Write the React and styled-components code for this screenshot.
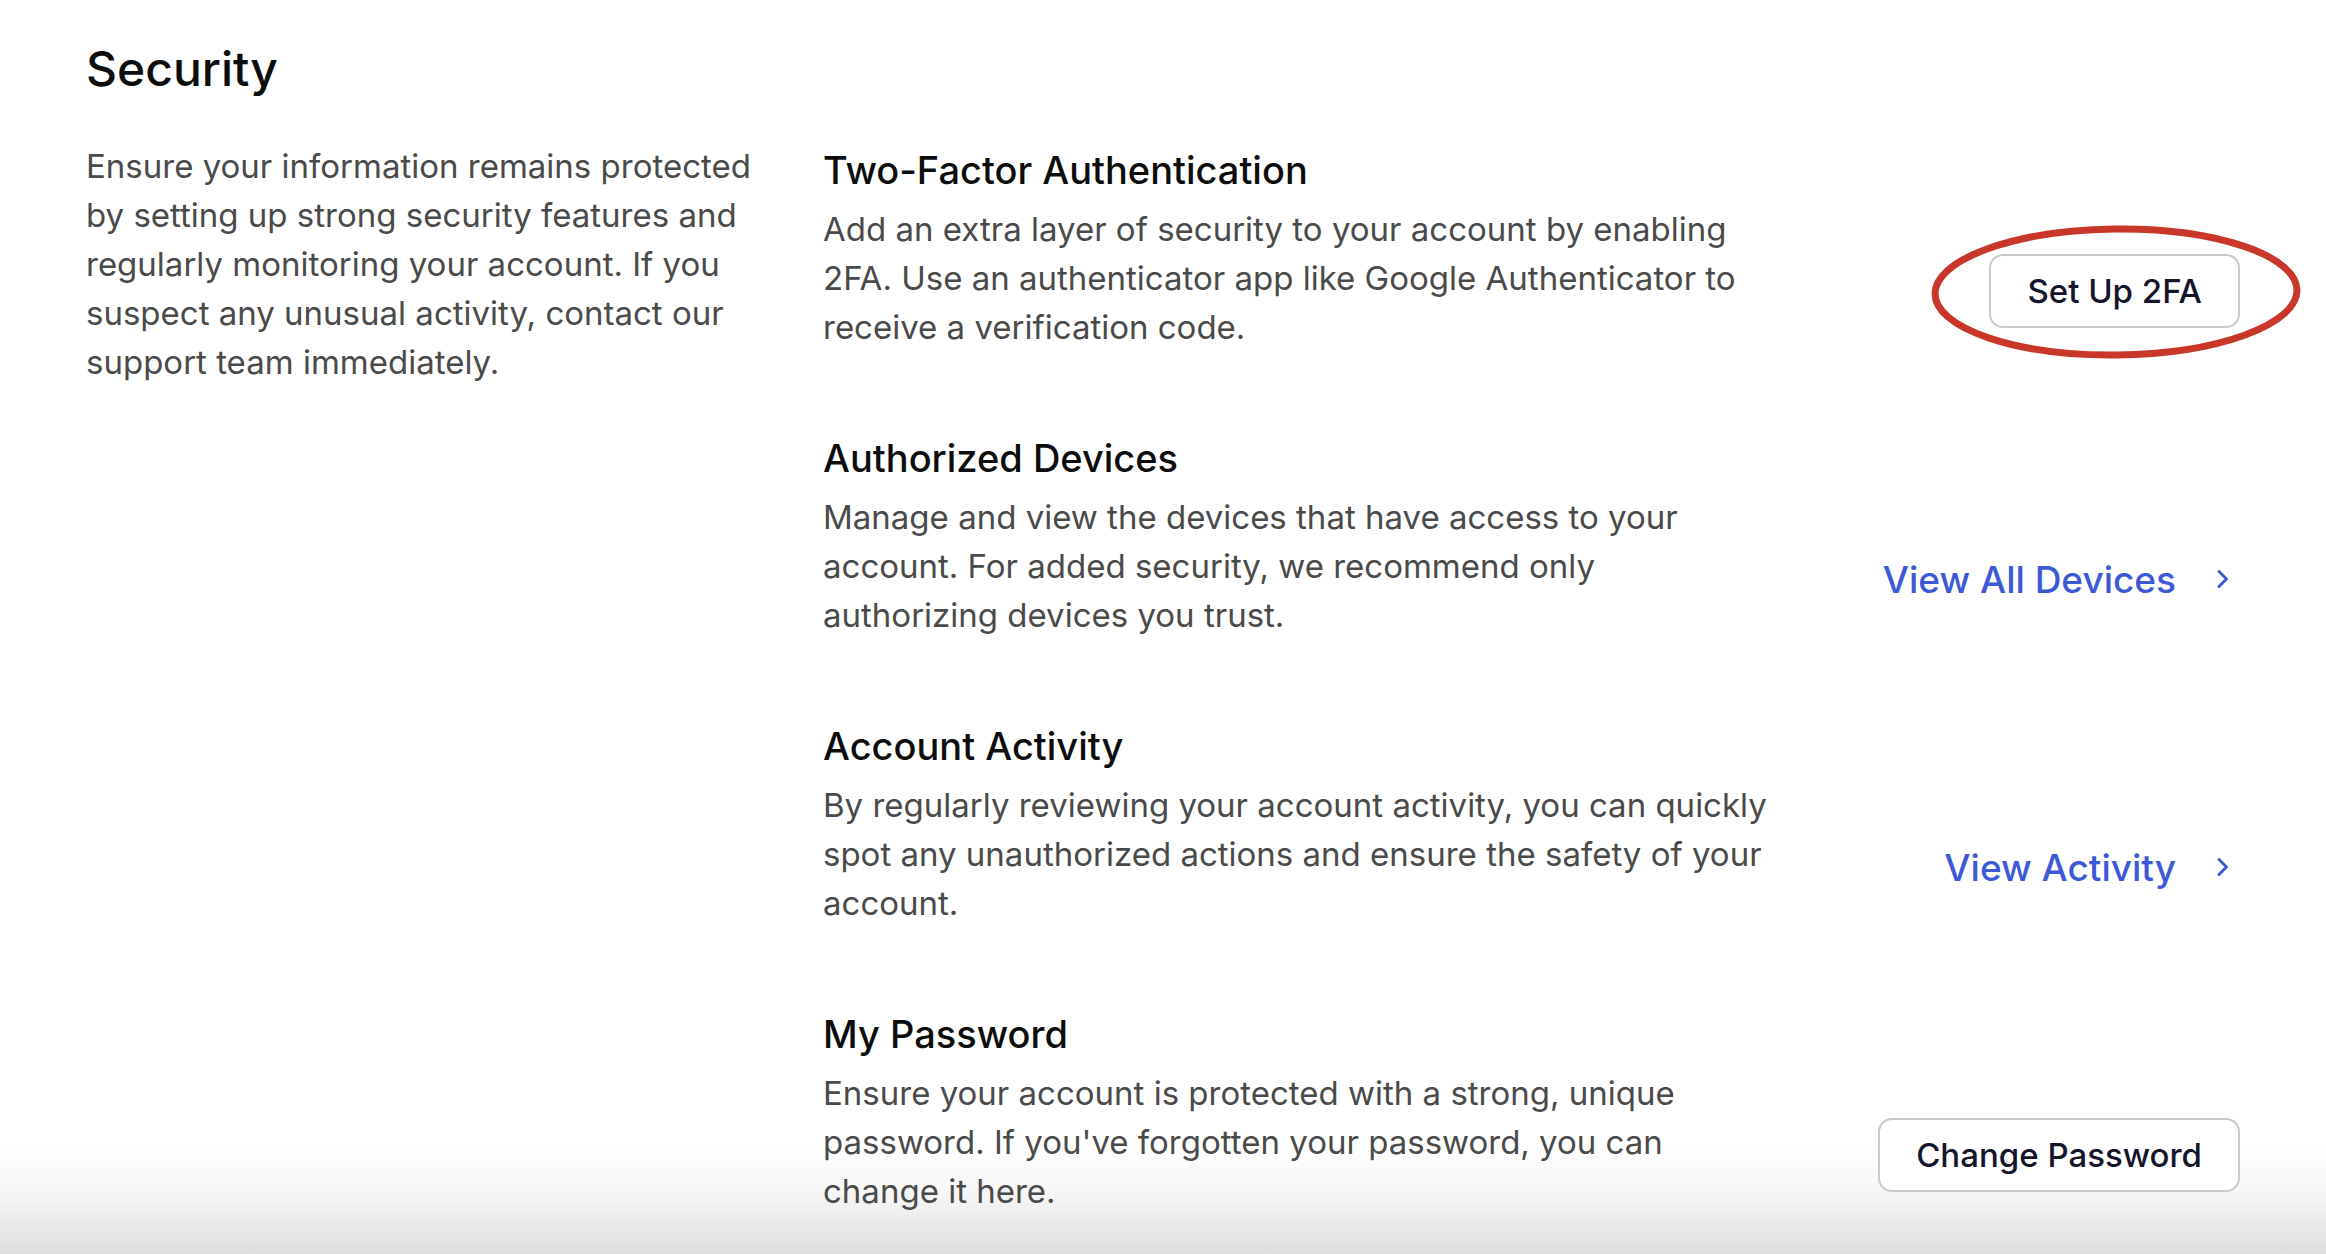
import React from "react";
import styled, { createGlobalStyle } from "styled-components";

const GlobalStyle = createGlobalStyle`
  html, body {
    margin: 0;
    padding: 0;
    background: #ffffff;
  }
  body {
    font-family: Inter, "Liberation Sans", sans-serif;
    -webkit-font-smoothing: antialiased;
  }
  * {
    box-sizing: border-box;
  }
`;

const sections = [
  {
    title: "Two-Factor Authentication",
    text: "Add an extra layer of security to your account by enabling 2FA. Use an authenticator app like Google Authenticator to receive a verification code.",
    action: { kind: "button", label: "Set Up 2FA", circled: true },
  },
  {
    title: "Authorized Devices",
    text: "Manage and view the devices that have access to your account. For added security, we recommend only authorizing devices you trust.",
    action: { kind: "link", label: "View All Devices" },
  },
  {
    title: "Account Activity",
    text: "By regularly reviewing your account activity, you can quickly spot any unauthorized actions and ensure the safety of your account.",
    action: { kind: "link", label: "View Activity" },
  },
  {
    title: "My Password",
    text: "Ensure your account is protected with a strong, unique password. If you've forgotten your password, you can change it here.",
    action: { kind: "button", label: "Change Password" },
  },
];

const Chevron = () => (
  <svg width="14" height="22" viewBox="0 0 14 22" fill="none">
    <path
      d="M3 3.5 L10.5 11 L3 18.5"
      stroke="currentColor"
      strokeWidth="3"
      strokeLinecap="round"
      strokeLinejoin="round"
    />
  </svg>
);

const Action = ({ action }) => {
  if (action.kind === "link") {
    return (
      <LinkAction href="#">
        <span>{action.label}</span>
        <Chevron />
      </LinkAction>
    );
  }

  return (
    <ButtonWrap>
      <OutlineButton>{action.label}</OutlineButton>
      {action.circled && (
        <Annotation viewBox="0 0 370 136" preserveAspectRatio="none">
          <ellipse
            cx="185"
            cy="68"
            rx="181"
            ry="63"
            fill="none"
            stroke="#c8372a"
            strokeWidth="7"
            transform="rotate(-0.6 185 68)"
          />
        </Annotation>
      )}
    </ButtonWrap>
  );
};

const App = () => {
  return (
    <>
      <GlobalStyle />
      <Page>
        <PageTitle>Security</PageTitle>

        <Columns>
          <Intro>
            Ensure your information remains protected by setting up strong
            security features and regularly monitoring your account. If you
            suspect any unusual activity, contact our support team immediately.
          </Intro>

          <SectionList>
            {sections.map((section) => (
              <SectionRow key={section.title}>
                <SectionText>
                  <SectionTitle>{section.title}</SectionTitle>
                  <SectionBody>{section.text}</SectionBody>
                </SectionText>
                <Action action={section.action} />
              </SectionRow>
            ))}
          </SectionList>
        </Columns>
      </Page>
    </>
  );
};

export default App;

const Page = styled.main`
  padding: 40px 86px 0 86px;
  height: 1254px;
  overflow: hidden;
  background: linear-gradient(
    to bottom,
    #ffffff 0%,
    #ffffff calc(100% - 110px),
    #f6f6f6 calc(100% - 60px),
    #dedede 100%
  );
`;

const PageTitle = styled.h1`
  margin: 0 0 44px 0;
  font-size: 48px;
  line-height: 58px;
  font-weight: 500;
  color: #0d0d0d;
`;

const Columns = styled.div`
  display: grid;
  grid-template-columns: 737px 1fr;
`;

const Intro = styled.p`
  margin: 0;
  width: 690px;
  font-size: 33px;
  line-height: 49px;
  color: #4a4a4a;
`;

const SectionList = styled.div`
  display: flex;
  flex-direction: column;
  padding-top: 5px;
`;

const SectionRow = styled.section`
  display: flex;
  align-items: center;
  justify-content: space-between;
  height: 288px;
`;

const SectionText = styled.div`
  align-self: flex-start;
  width: 955px;
  padding-bottom: 82px;
`;

const SectionTitle = styled.h2`
  margin: 0 0 12px 0;
  font-size: 38px;
  line-height: 46px;
  font-weight: 500;
  color: #0d0d0d;
`;

const SectionBody = styled.p`
  margin: 0;
  font-size: 33px;
  line-height: 49px;
  color: #4a4a4a;
`;

const ButtonWrap = styled.div`
  position: relative;
  display: flex;
`;

const OutlineButton = styled.button`
  height: 74px;
  padding: 0 36px;
  border: 2px solid #c9c9ce;
  border-radius: 14px;
  background: #ffffff;
  font-family: Inter, "Liberation Sans", sans-serif;
  font-size: 33px;
  font-weight: 500;
  color: #14142b;
  cursor: pointer;
`;

const Annotation = styled.svg`
  position: absolute;
  right: -61px;
  top: -30px;
  width: 370px;
  height: 136px;
  pointer-events: none;
  overflow: visible;
`;

const LinkAction = styled.a`
  display: flex;
  align-items: center;
  gap: 40px;
  margin-right: 10px;
  font-size: 37px;
  font-weight: 500;
  color: #3d5ad6;
  text-decoration: none;

  svg {
    color: #3d5ad6;
  }
`;
